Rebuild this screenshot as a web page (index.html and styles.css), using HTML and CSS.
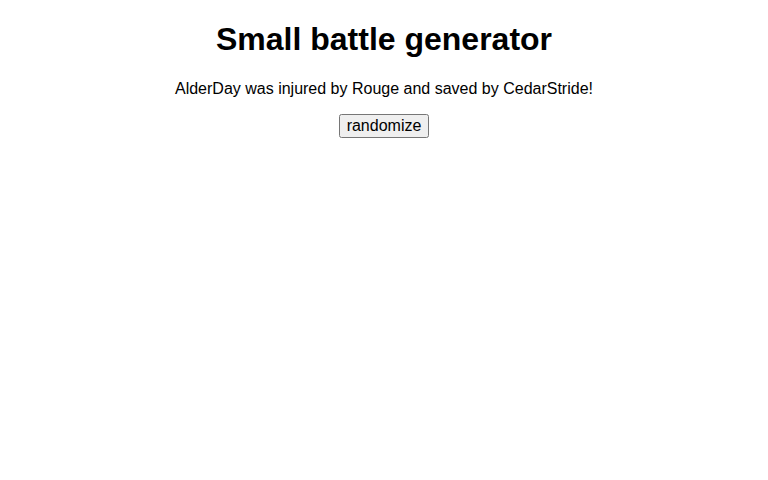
FILE: index.html
```html
<!DOCTYPE html>
<html lang="en">
<head>
    <meta charset="UTF-8">
    <meta name="viewport" content="width=device-width, initial-scale=1.0">
    <title>Small battle generator</title>
    <link rel="stylesheet" href="styles.css">
</head>
<body>
    <main class="generator">
        <h1>Small battle generator</h1>
        <p id="battleText">AlderDay was injured by Rouge and saved by CedarStride!</p>
        <button id="randomizeButton" onclick="randomize()">randomize</button>
    </main>

    <script>
        const names = ['AlderDay', 'Rouge', 'CedarStride', 'MossPelt', 'Ashfall', 'Brindle'];

        function pick(list, skip) {
            const options = list.filter(n => !skip.includes(n));
            return options[Math.floor(Math.random() * options.length)];
        }

        // Build a new sentence from three different names
        function randomize() {
            const a = pick(names, []);
            const b = pick(names, [a]);
            const c = pick(names, [a, b]);
            document.getElementById('battleText').textContent =
                `${a} was injured by ${b} and saved by ${c}!`;
        }
    </script>
</body>
</html>
```

FILE: styles.css
```css
body {
    font-family: "Liberation Sans", Arial, sans-serif;
    margin: 0;
    padding: 0;
    background-color: white;
    color: black;
}
.generator {
    text-align: center;
}
button {
    font-family: "Liberation Sans", Arial, sans-serif;
    font-size: 16px;
}
```
